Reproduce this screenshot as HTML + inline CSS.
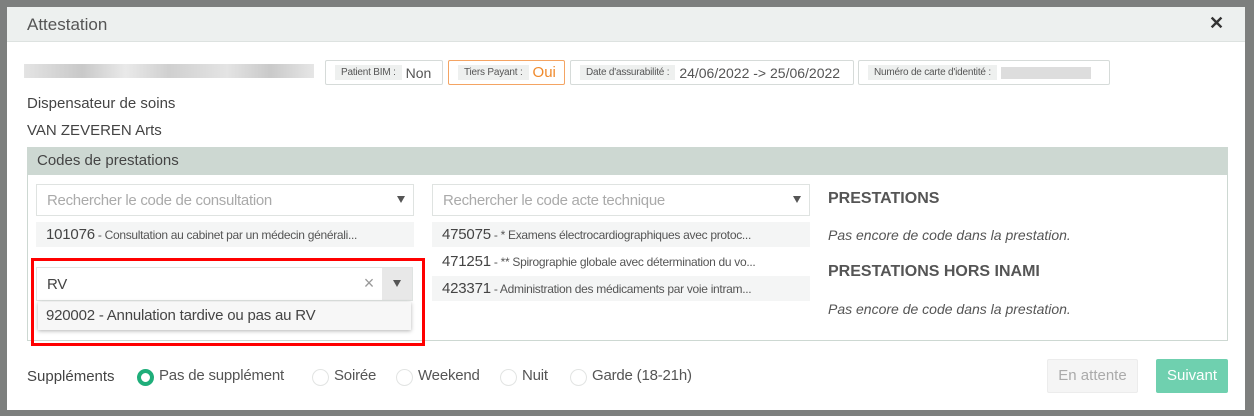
<!DOCTYPE html>
<html><head><meta charset="utf-8"><style>
*{box-sizing:border-box;margin:0;padding:0}
body{width:1254px;height:416px;background:#7d7f7e;font-family:"Liberation Sans",sans-serif;color:#555;position:relative;overflow:hidden;font-size:14px}
.a{position:absolute}
.modal{left:7px;top:7px;width:1238px;height:403px;background:#fff}
.hdr{left:7px;top:7px;width:1238px;height:35px;background:#edf0ef;border-bottom:1px solid #dde2e0}
.box{border:1px solid #d6dbd9;border-radius:2px;height:25px;top:60px;display:flex;align-items:center;padding-left:9px;font-size:14px;color:#555;white-space:nowrap;overflow:hidden}
.lbl{background:#eef0ef;font-size:10px;padding:2px 6px;margin-right:4px;color:#555;white-space:nowrap;letter-spacing:-0.2px}
.sel{border:1px solid #dfe3e1;height:32px;background:#fff;color:#aaa;font-size:15px;padding-left:10px;display:flex;align-items:center;letter-spacing:-0.3px}
.arr{position:absolute;right:8px;top:11px;width:0;height:0;border-left:4px solid transparent;border-right:4px solid transparent;border-top:7px solid #555}
.it{height:25px;font-size:12px;padding-left:10px;display:flex;align-items:center;color:#555;white-space:nowrap;overflow:hidden;letter-spacing:-0.3px}
.it b{font-size:15px;font-weight:normal;color:#444;margin-right:3px;letter-spacing:-0.2px}
.bg{background:#f4f5f5}
.radio{width:17px;height:17px;border-radius:50%;border:1px solid #e2e4e3;top:369px}
.rl{top:367px;font-size:15px;color:#555;letter-spacing:-0.2px}
</style></head><body>
<div class="a modal"></div>
<div class="a hdr"></div>
<div class="a" style="left:27px;top:15px;font-size:17px;color:#555">Attestation</div>
<div class="a" style="left:1209px;top:13px;font-size:18px;font-weight:bold;color:#333">✕</div>

<div class="a" style="left:24px;top:64px;width:290px;height:14px;background:linear-gradient(90deg,#ddd,#bbb 20%,#e4e4e4 35%,#c4c4c4 50%,#ddd 70%,#bcbcbc 85%,#e0e0e0);opacity:.8"></div>
<div class="a box" style="left:325px;width:118px"><span class="lbl">Patient BIM :</span>Non</div>
<div class="a box" style="left:448px;width:117px;border-color:#f4a463"><span class="lbl">Tiers Payant :</span><span style="color:#f08a2c;font-size:15px">Oui</span></div>
<div class="a box" style="left:570px;width:284px"><span class="lbl">Date d'assurabilité :</span>24/06/2022 -&gt; 25/06/2022</div>
<div class="a box" style="left:858px;width:252px"><span class="lbl">Numéro de carte d'identité :</span><span style="display:inline-block;width:90px;height:12px;background:#ddd"></span></div>

<div class="a" style="left:27px;top:95px;font-size:15px;color:#444">Dispensateur de soins</div>
<div class="a" style="left:27px;top:122px;font-size:15px;color:#444">VAN ZEVEREN Arts</div>

<div class="a" style="left:27px;top:147px;width:1201px;height:194px;border:1px solid #cdd8d2"></div>
<div class="a" style="left:27px;top:147px;width:1201px;height:28px;background:#cdd8d2;padding:5px 0 0 10px;font-size:15px;color:#444">Codes de prestations</div>

<div class="a sel" style="left:36px;top:184px;width:378px">Rechercher le code de consultation<span class="arr"></span></div>
<div class="a sel" style="left:432px;top:184px;width:378px">Rechercher le code acte technique<span class="arr"></span></div>
<div class="a it bg" style="left:36px;top:222px;width:378px"><b>101076</b> - Consultation au cabinet par un médecin générali...</div>
<div class="a it bg" style="left:432px;top:222px;width:378px"><b>475075</b> - * Examens électrocardiographiques avec protoc...</div>
<div class="a it" style="left:432px;top:249px;width:378px"><b>471251</b> - ** Spirographie globale avec détermination du vo...</div>
<div class="a it bg" style="left:432px;top:276px;width:378px"><b>423371</b> - Administration des médicaments par voie intram...</div>

<div class="a" style="left:31px;top:258px;width:394px;height:88px;border:3px solid #f00"></div>
<div class="a sel" style="left:36px;top:267px;width:377px;height:34px;color:#444">RV
 <span class="a" style="right:38px;top:5px;font-size:18px;color:#999">×</span>
 <span class="a" style="right:0;top:0;width:30px;height:32px;background:#e8e8e8"></span><span class="arr" style="top:12px;right:11px"></span></div>
<div class="a" style="left:38px;top:302px;width:373px;height:28px;background:#f7f7f7;box-shadow:0 1px 4px rgba(0,0,0,.3);font-size:15px;color:#444;padding:5px 0 0 8px;letter-spacing:-0.2px">920002 - Annulation tardive ou pas au RV</div>

<div class="a" style="left:828px;top:190px;font-size:16px;font-weight:bold;color:#555">PRESTATIONS</div>
<div class="a" style="left:828px;top:227px;font-size:14px;font-style:italic;color:#555">Pas encore de code dans la prestation.</div>
<div class="a" style="left:828px;top:263px;font-size:16px;font-weight:bold;color:#555">PRESTATIONS HORS INAMI</div>
<div class="a" style="left:828px;top:301px;font-size:14px;font-style:italic;color:#555">Pas encore de code dans la prestation.</div>

<div class="a" style="left:27px;top:368px;font-size:15px;color:#444">Suppléments</div>
<div class="a radio" style="left:137px;border:4px solid #1fae7a"></div><div class="a rl" style="left:159px">Pas de supplément</div>
<div class="a radio" style="left:312px"></div><div class="a rl" style="left:334px">Soirée</div>
<div class="a radio" style="left:396px"></div><div class="a rl" style="left:418px">Weekend</div>
<div class="a radio" style="left:500px"></div><div class="a rl" style="left:522px">Nuit</div>
<div class="a radio" style="left:570px"></div><div class="a rl" style="left:592px">Garde (18-21h)</div>

<div class="a" style="left:1047px;top:359px;width:91px;height:34px;background:#f5f5f5;border:1px solid #ececec;border-radius:2px;color:#aaa;font-size:15px;text-align:center;line-height:32px">En attente</div>
<div class="a" style="left:1156px;top:359px;width:72px;height:34px;background:#6fd0af;border-radius:2px;color:#fff;font-size:15px;text-align:center;line-height:34px">Suivant</div>
</body></html>
